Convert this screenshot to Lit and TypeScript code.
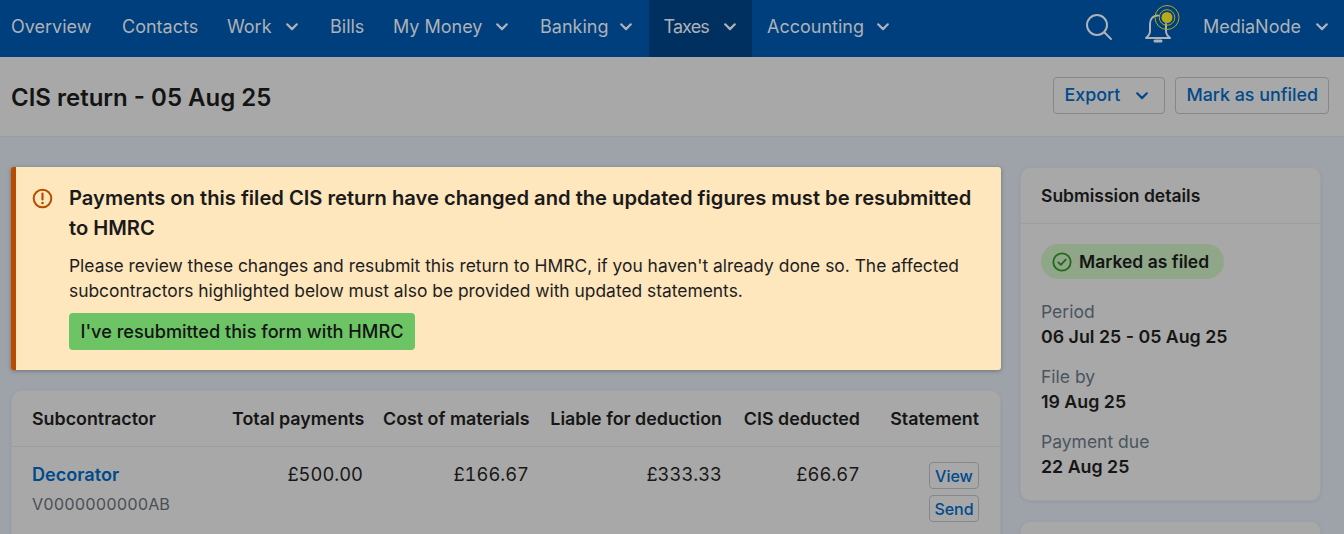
import { LitElement, html, css, svg } from "lit";
import { customElement } from "lit/decorators.js";

const chevron = svg`<svg class="chev" width="12" height="8" viewBox="0 0 12 8" fill="none"><path d="M1.200 1.300 6 6.100l4.800-4.800" stroke="currentColor" stroke-width="2.200" stroke-linecap="round" stroke-linejoin="round"/></svg>`;

const NAV = [
  { label: "Overview", w: 80 },
  { label: "Contacts", w: 74 },
  { label: "Work", w: 44, menu: true },
  { label: "Bills", w: 32 },
  { label: "My Money", w: 88, menu: true },
  { label: "Banking", w: 65, menu: true, next: true },
  { label: "Taxes", w: 45.5, menu: true, active: true },
  { label: "Accounting", w: 95, menu: true },
];

@customElement("app-root")
export class AppRoot extends LitElement {
  static styles = css`
    :host {
      display: block;
      height: 534px;
      overflow: hidden;
      background: #9ea2a9;
      font-family: "Inter", "Liberation Sans", sans-serif;
      color: #161616;
      font-size: 17px;
    }
    a { text-decoration: none; color: inherit; }
    .nav {
      display: flex;
      align-items: stretch;
      height: 57px;
      background: #003f7d;
      color: #aeb2b7;
      font-size: 18px;
      padding-left: 11px;
    }
    .nav-item {
      display: flex;
      align-items: center;
      padding-right: 31px;
      padding-bottom: 5px;
      white-space: nowrap;
    }
    .nav-item .chev { margin-left: 15px; margin-right: 1px; margin-top: 2px; }
    .nav-item.next { padding-right: 16px; }
    .nav-item.active {
      background: #00305f;
      padding: 0 16px 5px 14.5px;
      margin-right: 15px;
    }
    .nav-item.active .chev { margin-right: 0; }
    .nav-item.active span { letter-spacing: -0.9px; }
    .nav-right {
      margin-left: auto;
      display: flex;
      align-items: center;
      padding-right: 16px;
    }
    .search { margin-right: 30px; margin-top: -3px; }
    .bell { margin-right: 24px; margin-top: -4px; overflow: visible; }
    .account { display: flex; align-items: center; gap: 15px; padding-bottom: 5px; }
    .account .chev { margin-top: 2px; }
    .page-head {
      display: flex;
      align-items: center;
      justify-content: space-between;
      height: 79px;
      background: #a8a8a8;
      border-bottom: 1px solid #9a9ea5;
      padding: 0 15px 0 11px;
    }
    h1 { margin: 2px 0 0; font-size: 24px; font-weight: 600; color: #141414; }
    .actions { display: flex; gap: 10px; margin-top: -2px; }
    .btn {
      display: flex;
      align-items: center;
      height: 37px;
      box-sizing: border-box;
      padding: 0 10px;
      border: 1px solid #85888b;
      border-radius: 4px;
      color: #004a8c;
      font-size: 17.85px;
      font-weight: 500;
      padding-bottom: 2px;
    }
    .btn.export { gap: 16px; padding: 0 16px 2px 11px; }
    .btn.export .chev { margin-top: 2px; }
    .main {
      display: flex;
      gap: 19px;
      padding: 30px 23px 0 11px;
    }
    .col-main { width: 990px; flex: none; }
    .col-side { flex: 1; display: flex; flex-direction: column; gap: 20px; }
    .alert {
      display: flex;
      box-sizing: border-box;
      height: 203px;
      background: #fee6bd;
      border-left: 5px solid #b84c00;
      border-radius: 3px;
      box-shadow: 0 1px 4px rgba(0, 0, 0, 0.3);
      padding: 16px 20px 0 16px;
      gap: 16px;
      margin-bottom: 20px;
    }
    .alert-icon { flex: none; margin-top: 5px; }
    .alert h2 {
      margin: 0 0 10px;
      font-size: 20.15px;
      line-height: 30px;
      font-weight: 600;
      color: #1a1a1a;
    }
    .alert p { margin: 0 0 10px; font-size: 17.4px; line-height: 25px; color: #1e1e1e; }
    .green {
      display: flex;
      width: fit-content;
      align-items: center;
      height: 37px;
      padding: 0 11.5px 1px;
      box-sizing: border-box;
      background: #6cc465;
      border-radius: 4px;
      font-size: 18.15px;
      font-weight: 500;
      color: #141414;
    }
    .card {
      background: #a8a8a8;
      border: 1px solid #9ea2a8;
      border-radius: 10px;
      box-shadow: 0 1px 3px rgba(90, 95, 105, 0.15);
    }
    .table { width: 988px; }
    .row {
      display: grid;
      grid-template-columns: 180px 131px 146px 173px 118px 99px;
      column-gap: 20px;
      padding: 0 20px;
    }
    .row.head {
      height: 55px;
      align-items: center;
      border-bottom: 1px solid #999da4;
      font-size: 17.85px;
      font-weight: 600;
      white-space: nowrap;
    }
    .num { text-align: right; }
    .row.body {
      padding-top: 15px;
      font-size: 18.35px;
      height: 100px;
      color: #171717;
      font-variant-numeric: tabular-nums;
    }
    .row.body .num { line-height: 25px; }
    .name { display: block; color: #004a8c; font-weight: 600; font-size: 18.1px; line-height: 24px; }
    .code { font-size: 16.2px; line-height: 24px; color: #4a4f54; margin-top: 6px; }
    .st { display: flex; flex-direction: column; align-items: flex-end; gap: 6px; }
    .mini {
      box-sizing: border-box;
      width: 50px;
      height: 27px;
      display: flex;
      align-items: center;
      justify-content: center;
      border: 1px solid #85888b;
      border-radius: 4px;
      color: #004a8c;
      font-size: 16px;
      font-weight: 500;
    }
    .side-head {
      height: 55px;
      display: flex;
      align-items: center;
      padding: 0 20px;
      border-bottom: 1px solid #999da4;
      font-size: 17.5px;
      font-weight: 600;
    }
    .side-body { padding: 20px 20px 0; height: 256px; }
    .badge {
      display: inline-flex;
      align-items: center;
      gap: 7px;
      height: 35px;
      padding: 0 15px 0 11px;
      border-radius: 18px;
      background: #8fa688;
      font-size: 17.5px;
      font-weight: 600;
      color: #141414;
      margin-bottom: 21px;
    }
    dl { margin: 0; }
    dt { font-size: 17.5px; line-height: 24px; color: #4a5560; }
    dd { margin: 0 0 16px; font-size: 17.8px; line-height: 25px; font-weight: 600; color: #161616; }
    dd:last-child { margin-bottom: 0; }
    .side-next { height: 60px; }
  `;

  render() {
    return html`
      <nav class="nav">
        ${NAV.map(
          (n) => html`<a class="nav-item ${n.active ? "active" : ""} ${n.next ? "next" : ""}">
            <span style="width:${n.w}px">${n.label}</span>${n.menu ? chevron : ""}
          </a>`
        )}
        <div class="nav-right">
          <svg class="search" width="28" height="28" viewBox="0 0 28 28" fill="none" stroke="#aeb2b7" stroke-width="2">
            <circle cx="12" cy="12" r="10"/>
            <path d="m19.500 19.500 6.500 6.500" stroke-linecap="round"/>
          </svg>
          <svg class="bell" width="36" height="38" viewBox="0 0 36 38" fill="none">
            <path d="M15 7.500C9.500 7.500 7 11.500 7 16v7c0 3-1.500 5-4 7h24c-2.500-2-4-4-4-7v-7" stroke="#aeb2b7" stroke-width="2" stroke-linejoin="round" stroke-linecap="round"/>
            <path d="M12 33h6" stroke="#aeb2b7" stroke-width="3" stroke-linecap="round"/>
            <circle cx="24" cy="9.500" r="5.500" fill="#b5a91c"/>
            <circle cx="24" cy="9.500" r="7.800" stroke="#b5a91c" stroke-width="1"/>
            <circle cx="24" cy="9.500" r="12" stroke="#b5a91c" stroke-width="1"/>
          </svg>
          <a class="account">MediaNode ${chevron}</a>
        </div>
      </nav>
      <header class="page-head">
        <h1>CIS return - 05 Aug 25</h1>
        <div class="actions">
          <a class="btn export">Export ${chevron}</a>
          <a class="btn">Mark as unfiled</a>
        </div>
      </header>
      <div class="main">
        <div class="col-main">
          <section class="alert">
            <svg class="alert-icon" width="21" height="21" viewBox="0 0 21 21" fill="none">
              <circle cx="10.500" cy="10.500" r="8.800" stroke="#b84c00" stroke-width="2"/>
              <path d="M10.500 5.500v6" stroke="#b84c00" stroke-width="2.200" stroke-linecap="round"/>
              <circle cx="10.500" cy="15" r="1.300" fill="#b84c00"/>
            </svg>
            <div>
              <h2>Payments on this filed CIS return have changed and the updated figures must be resubmitted to HMRC</h2>
              <p>Please review these changes and resubmit this return to HMRC, if you haven't already done so. The affected subcontractors highlighted below must also be provided with updated statements.</p>
              <a class="green">I've resubmitted this form with HMRC</a>
            </div>
          </section>
          <section class="card table">
            <div class="row head">
              <div>Subcontractor</div>
              <div class="num">Total payments</div>
              <div class="num">Cost of materials</div>
              <div class="num">Liable for deduction</div>
              <div class="num">CIS deducted</div>
              <div class="num">Statement</div>
            </div>
            <div class="row body">
              <div>
                <a class="name">Decorator</a>
                <div class="code">V0000000000AB</div>
              </div>
              <div class="num">£500.00</div>
              <div class="num">£166.67</div>
              <div class="num">£333.33</div>
              <div class="num">£66.67</div>
              <div class="st"><a class="mini">View</a><a class="mini">Send</a></div>
            </div>
          </section>
        </div>
        <aside class="col-side">
          <section class="card">
            <div class="side-head">Submission details</div>
            <div class="side-body">
              <div class="badge">
                <svg width="20" height="20" viewBox="0 0 20 20" fill="none">
                  <circle cx="10" cy="10" r="8.700" stroke="#23681c" stroke-width="1.800"/>
                  <path d="m6.300 10.300 2.600 2.600 4.800-5.200" stroke="#23681c" stroke-width="1.800" stroke-linecap="round" stroke-linejoin="round"/>
                </svg>
                Marked as filed
              </div>
              <dl>
                <dt>Period</dt><dd>06 Jul 25 - 05 Aug 25</dd>
                <dt>File by</dt><dd>19 Aug 25</dd>
                <dt>Payment due</dt><dd>22 Aug 25</dd>
              </dl>
            </div>
          </section>
          <section class="card side-next"></section>
        </aside>
      </div>
    `;
  }
}
